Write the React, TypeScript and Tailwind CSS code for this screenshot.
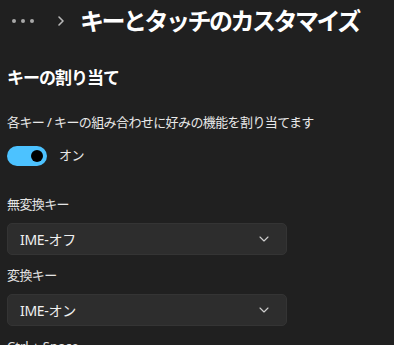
import React, { useState } from "react";

const font = "font-['Noto_Sans','Noto_Sans_CJK_JP',sans-serif]";

const Chevron: React.FC = () => (
  <svg width="10" height="6" viewBox="0 0 10 6" fill="none">
    <path d="M1 1l4 4 4-4" stroke="#cfcfcf" strokeWidth="1.1" strokeLinecap="round" strokeLinejoin="round" />
  </svg>
);

const Dropdown: React.FC<{ label: string; value: string }> = ({ label, value }) => (
  <div className="flex flex-col">
    <div className="text-[13px] leading-[18px] tracking-[-0.6px] text-[#e4e4e4]">{label}</div>
    <div className="mt-[10px] flex h-[32px] w-[280px] items-center justify-between rounded-[5px] border border-[#343434] bg-[#2d2d2d] pl-[12px] pr-[17px]">
      <span className="text-[14px] tracking-[-0.3px] text-[#f0f0f0]">{value}</span>
      <Chevron />
    </div>
  </div>
);

const App: React.FC = () => {
  const [on, setOn] = useState(true);

  return (
    <div className={`h-[345px] w-[394px] overflow-hidden bg-[#202020] text-white ${font}`}>
      {/* breadcrumb header */}
      <div className="flex h-[41px] items-center pl-[12px]">
        <div className="flex items-center gap-[5px]">
          <span className="h-[4px] w-[4px] rounded-full bg-[#a8a8a8]" />
          <span className="h-[4px] w-[4px] rounded-full bg-[#a8a8a8]" />
          <span className="h-[4px] w-[4px] rounded-full bg-[#a8a8a8]" />
        </div>
        <svg className="ml-[23px]" width="8" height="12" viewBox="0 0 8 12" fill="none">
          <path d="M2 2l4 4-4 4" stroke="#b8b8b8" strokeWidth="1.6" strokeLinecap="round" strokeLinejoin="round" />
        </svg>
        <h1 className="ml-[15px] text-[24px] font-semibold tracking-[-2.5px] text-white">
          キーとタッチのカスタマイズ
        </h1>
      </div>

      <div className="px-[7px]">
        <h2 className="mt-[25px] text-[17px] font-bold leading-[24px] tracking-[-1px]">キーの割り当て</h2>

        <p className="mt-[23px] text-[13px] leading-[18px] tracking-[-0.6px] text-[#e8e8e8]">
          各キー / キーの組み合わせに好みの機能を割り当てます
        </p>

        <div className="mt-[15px] flex items-center">
          <button
            onClick={() => setOn(!on)}
            className="flex h-[20px] w-[40px] items-center justify-end rounded-full bg-[#4cc2ff] pr-[4px]"
          >
            <span className="h-[12px] w-[12px] rounded-full bg-black" />
          </button>
          <span className="ml-[12px] text-[13px] tracking-[-0.6px] text-[#e8e8e8]">{on ? "オン" : "オフ"}</span>
        </div>

        <div className="mt-[29px] flex flex-col gap-[11px]">
          <Dropdown label="無変換キー" value="IME-オフ" />
          <Dropdown label="変換キー" value="IME-オン" />
          <div className="text-[13px] leading-[18px] text-[#e4e4e4]">Ctrl + Space</div>
        </div>
      </div>
    </div>
  );
};

export default App;
